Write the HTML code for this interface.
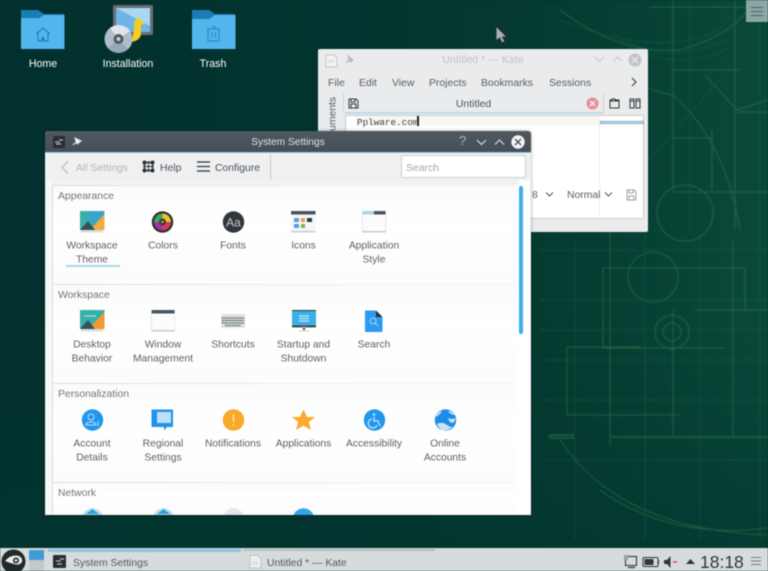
<!DOCTYPE html>
<html><head><meta charset="utf-8"><title>Desktop</title>
<style>
html,body{margin:0;padding:0;width:768px;height:571px;overflow:hidden;background:#02312f}
#r{position:absolute;left:0;top:0;width:768px;height:571px;overflow:hidden;filter:blur(.45px);font-family:"Liberation Sans",sans-serif;color:#4d4d4d;font-size:10.4px}
.a{position:absolute}
.t{position:absolute;white-space:nowrap;line-height:13px;transform:translateY(1px)}
.c{position:absolute;width:90px;text-align:center;line-height:13.7px;color:#5a5f63;font-size:10.3px;transform:translateY(1.3px)}
.g{position:absolute;left:52px;width:463px;height:98px;border-left:1px solid #dfe1e2;border-top:1px solid transparent;border-image:linear-gradient(90deg,#dcdedf,#f2f3f3 70%) 1;border-right:none;border-bottom:none;background:linear-gradient(#fafbfb,#fff 40%,#fcfcfc)}
.h{position:absolute;left:58px;color:#70757a;font-size:10.4px;line-height:13px;transform:translateY(1px)}
.d{position:absolute;color:#fff;font-size:10.6px;width:90px;text-align:center;line-height:13px;transform:translateY(1px)}
</style></head><body><div id="r">

<!-- wallpaper -->
<svg class="a" style="left:0;top:0;filter:blur(.5px)" width="768" height="571" viewBox="0 0 768 571">
<defs>
<linearGradient id="bg" x1="0" y1="0" x2="1" y2="0"><stop offset="0" stop-color="#02302e"/><stop offset=".5" stop-color="#03352f"/><stop offset=".75" stop-color="#063c32"/><stop offset="1" stop-color="#0a4a3a"/></linearGradient>
<linearGradient id="bot" x1="0" y1="0" x2="0" y2="1"><stop offset=".55" stop-color="#03352f" stop-opacity="0"/><stop offset="1" stop-color="#03352f" stop-opacity=".75"/></linearGradient>
</defs>
<rect width="768" height="571" fill="url(#bg)"/>
<rect width="768" height="571" fill="url(#bot)"/>
<g fill="none" stroke="#3c8a50" stroke-width="1" opacity=".5">
<path d="M650 7H748M673 0V190M735 0V230M673 95Q725 140 740 230M705 75L737 110L768 100M737 112H768M673 138H712M712 130V190M673 70H740M673 192H768M600 60Q640 90 673 95M560 10Q620 55 680 50Q735 35 755 0"/>
<circle cx="685" cy="213" r="28"/><circle cx="653" cy="277" r="25"/><circle cx="672" cy="332" r="17"/><circle cx="672" cy="332" r="9"/>
<path d="M603 268H730M603 268V348H725M610 230V445M673 310V435M733 240V435"/>
<path d="M567 347V415H680M567 347H640"/>
<path d="M550 435H573V438H550ZM610 437H768" stroke-width="1.500"/>
<path d="M560 440Q620 530 768 535M600 490Q670 540 768 528"/>
<path d="M700 268H745V310H700M695 310H768"/>
</g>
<g fill="none" stroke="#1f6640" stroke-width="1" opacity=".38">
<path d="M540 250H768M540 300H768M540 330H768M540 360H768M540 400H768M540 460H768M575 240V540M645 235V540M700 235V540M760 0V540M690 0V230M720 80L640 170"/>
<path d="M560 20Q660 60 720 30M610 30Q660 70 725 40M620 40Q670 75 730 48"/>
</g>
</svg>

<div class="a" style="left:746px;top:0;width:22px;height:22px;background:#8aa7a5"></div>
<div class="a" style="left:751px;top:7px;width:12px;height:7px;border-top:1px solid #4d6060;border-bottom:1px solid #4d6060"></div>
<div class="a" style="left:751px;top:10.500px;width:12px;height:1px;background:#4d6060"></div>

<!-- desktop icons -->
<svg class="a" style="left:21px;top:9px" width="44" height="42" viewBox="0 0 44 42">
<path d="M0 1H17L23 5H43V14H0Z" fill="#1b7cb4"/><rect x="0" y="9" width="43.500" height="31" fill="#4bb1e9"/><path d="M0 10H17L23 6H43.500V40H0Z" fill="#52b6ec"/>
<path d="M15 25L22 19L29 25M17 24V32H27V24" fill="none" stroke="#1f82b8" stroke-width="1.200"/><rect x="20.500" y="28" width="3" height="4" fill="#1f82b8"/></svg>
<div class="d" style="left:-2px;top:57px">Home</div>

<svg class="a" style="left:103px;top:4px" width="52" height="50" viewBox="0 0 52 50">
<rect x="10" y="1" width="40" height="30" rx="2" fill="#6a6e70"/><rect x="13" y="4" width="34" height="24" fill="#6fb4e6"/><path d="M13 4H47V22Z" fill="#a9d6f3"/>
<path d="M31 19L34 13L42 20L38 21V31Q36 37 28 38L31 27Z" fill="#f5cd1b"/>
<circle cx="15.500" cy="35" r="14" fill="#aebccb"/><path d="M15.500 35L7 24A14 14 0 0 1 27 27Z" fill="#dfe5ec"/><path d="M15.500 35L5 44A14 14 0 0 0 25 45Z" fill="#98a8bb"/><circle cx="15.500" cy="35" r="5" fill="#4e5a5c"/><circle cx="15.500" cy="35" r="2" fill="#c8ced4"/></svg>
<div class="d" style="left:83px;top:57px">Installation</div>

<svg class="a" style="left:191px;top:9px" width="45" height="42" viewBox="0 0 45 42">
<path d="M1 1H18L24 5H44V14H1Z" fill="#1b7cb4"/><path d="M1 10H18L24 6H44.500V40H1Z" fill="#52b6ec"/>
<path d="M16 20H29M21 18H25M17 20V32H28V20M21 23V29M24.500 23V29" fill="none" stroke="#2b8cc2" stroke-width="1.200"/></svg>
<div class="d" style="left:168px;top:57px">Trash</div>

<!-- cursor -->
<svg class="a" style="left:494px;top:25px" width="14" height="20" viewBox="0 0 14 20"><path d="M2 1V16L5.500 13L8 18L11 16.500L8.500 12H13Z" fill="#a9afb1" stroke="#24302f" stroke-width="1"/></svg>

<!-- Kate -->
<div class="a" style="left:318px;top:49px;width:330px;height:183px;background:#e9ebec;border-radius:2px"></div>
<svg class="a" style="left:325px;top:54px" width="14" height="14" viewBox="0 0 14 14"><path d="M1 1H9L12 4V13H1Z" fill="#f2f3f3" stroke="#c3c7c9"/><path d="M3 6H9M3 8H9" stroke="#d4d7d8"/></svg>
<svg class="a" style="left:344px;top:54px" width="11" height="11" viewBox="0 0 11 11"><path d="M2 9L5 6M4 2L9 6L6 8Z" fill="#b4b9bc" stroke="#b4b9bc"/></svg>
<div class="t" style="left:318px;width:330px;text-align:center;top:53px;color:#c1c5c8;font-size:10.600px">Untitled * — Kate</div>
<svg class="a" style="left:590px;top:53px" width="58" height="14" viewBox="0 0 58 14"><path d="M5 4L9.500 8.500L14 4M23 8.500L27.500 4L32 8.500" fill="none" stroke="#c5c9cb" stroke-width="1.100"/><circle cx="45" cy="7" r="6.500" fill="#c1c5c7"/><path d="M42 4L48 10M48 4L42 10" stroke="#eceeef" stroke-width="1.200"/></svg>
<div class="t" style="left:328px;top:76px;color:#5a5f63">File</div>
<div class="t" style="left:359px;top:76px;color:#5a5f63">Edit</div>
<div class="t" style="left:392px;top:76px;color:#5a5f63">View</div>
<div class="t" style="left:429px;top:76px;color:#5a5f63">Projects</div>
<div class="t" style="left:481px;top:76px;color:#5a5f63">Bookmarks</div>
<div class="t" style="left:549px;top:76px;color:#5a5f63">Sessions</div>
<svg class="a" style="left:630px;top:77px" width="8" height="10" viewBox="0 0 8 10"><path d="M2 1L6 5L2 9" fill="none" stroke="#3c4144" stroke-width="1.100"/></svg>
<div class="a" style="left:343px;top:93px;width:1px;height:20px;background:#cfd2d3"></div>
<div class="a" style="left:310px;top:110px;width:46px;text-align:center;line-height:13px;white-space:nowrap;transform:rotate(-90deg);color:#5a5f63">cuments</div>
<svg class="a" style="left:348px;top:98px" width="11" height="11" viewBox="0 0 11 11"><path d="M1 1H8L10 3V10H1ZM3 1V4H7V1M3 10V6H8V10" fill="none" stroke="#33383b"/></svg>
<div class="t" style="left:345px;width:257px;text-align:center;top:97px;color:#50555a">Untitled</div>
<svg class="a" style="left:586px;top:97px" width="13" height="13" viewBox="0 0 13 13"><circle cx="6.500" cy="6.500" r="6" fill="#e58e97"/><path d="M4 4L9 9M9 4L4 9" stroke="#fff" stroke-width="1.200"/></svg>
<div class="a" style="left:603px;top:93px;width:1px;height:20px;background:#cfd2d3"></div>
<svg class="a" style="left:609px;top:98px" width="32" height="11" viewBox="0 0 32 11"><path d="M1 2H3V1H6V2H10V10H1Z" fill="none" stroke="#33383b"/><path d="M1 3H10" stroke="#33383b"/><path d="M21 1H25V10H21ZM27 1H31V10H27Z" fill="none" stroke="#33383b"/><path d="M21 3H25M27 3H31" stroke="#33383b"/></svg>
<div class="a" style="left:345px;top:112px;width:258px;height:2px;background:#bcdcee"></div>
<div class="a" style="left:345px;top:115px;width:299px;box-sizing:border-box;height:104px;background:#fff;border:1px solid #c9cccd"></div>
<div class="a" style="left:356px;top:116px;width:243px;height:10px;background:#f8f7f3"></div>
<div class="a" style="left:599px;top:116px;width:1px;height:102px;background:#eceeee"></div>
<div class="a" style="left:600px;top:121px;width:44px;height:3px;background:#d8e8f2;border:1px solid #7fa6bd;box-sizing:border-box"></div>
<div class="t" style="left:357px;top:115px;font-family:'Liberation Mono',monospace;font-size:9.300px;color:#3b3f42">Pplware.com</div>
<div class="a" style="left:417px;top:116px;width:1.500px;height:10px;background:#222"></div>
<div class="t" style="left:532px;top:188px;color:#5a5f63">8</div>
<svg class="a" style="left:545px;top:189px" width="100" height="12" viewBox="0 0 100 12"><path d="M1 3.500L4.500 7L8 3.500M60 3.500L63.500 7L67 3.500" fill="none" stroke="#50555a"/><path d="M82 1H89L91 3V11H82ZM84 1V4H88V1M84 11V7H89V11" fill="none" stroke="#9ea3a6"/></svg>
<div class="t" style="left:567px;top:188px;color:#5a5f63">Normal</div>

<!-- System settings -->
<div class="a" style="left:45px;top:131px;width:486px;height:384px;background:#eff0f1;border-radius:3px 3px 0 0;box-shadow:0 0 3px rgba(0,0,0,.35)"></div>
<div class="a" style="left:45px;top:131px;width:486px;height:21px;background:linear-gradient(#4f5962,#454f58);border-radius:3px 3px 0 0"></div>
<div class="a" style="left:45px;top:151.500px;width:486px;height:1.500px;background:#8ec8e6"></div>
<svg class="a" style="left:52px;top:135px" width="34" height="13" viewBox="0 0 34 13"><rect x="1" y="1" width="12" height="12" rx="1" fill="#2a2e32"/><path d="M3 7H8M7 5H11M9 9H4" stroke="#d0d3d5" stroke-width=".9"/><path d="M21 10L24 7M23 3L29 6L25 9Z" fill="#eceeef" stroke="#eceeef"/></svg>
<div class="t" style="left:45px;width:486px;text-align:center;top:134.500px;color:#dfe2e4;font-size:10.200px">System Settings</div>
<div class="t" style="left:459px;top:133px;color:#aeb5ba;font-size:13px">?</div>
<svg class="a" style="left:475px;top:135px" width="50" height="14" viewBox="0 0 50 14"><path d="M2 5L6.500 9.500L11 5M20 9.500L24.500 5L29 9.500" fill="none" stroke="#dfe2e4" stroke-width="1.100"/><circle cx="43" cy="7" r="6.700" fill="#f3f4f5"/><path d="M40 4L46 10M46 4L40 10" stroke="#4a545d" stroke-width="1.300"/></svg>

<!-- toolbar -->
<svg class="a" style="left:60px;top:160px" width="10" height="15" viewBox="0 0 10 15"><path d="M8 1.500L2 7.500L8 13.500" fill="none" stroke="#b6babc" stroke-width="1.200"/></svg>
<div class="t" style="left:76px;top:161px;color:#b1b5b8">All Settings</div>
<svg class="a" style="left:142px;top:160px" width="13" height="13" viewBox="0 0 13 13"><rect x="2.500" y="2.500" width="8" height="8" fill="none" stroke="#2e3236" stroke-width="1.500"/><circle cx="2.500" cy="2.500" r="2" fill="#2e3236"/><circle cx="10.500" cy="2.500" r="2" fill="#2e3236"/><circle cx="2.500" cy="10.500" r="2" fill="#2e3236"/><circle cx="10.500" cy="10.500" r="2" fill="#2e3236"/><path d="M6.500 1V12M1 6.500H12" stroke="#2e3236"/></svg>
<div class="t" style="left:160px;top:161px;color:#4d5256">Help</div>
<svg class="a" style="left:197px;top:161px" width="13" height="11" viewBox="0 0 13 11"><path d="M0 1H13M0 5.500H13M0 10H13" stroke="#2e3236" stroke-width="1.200"/></svg>
<div class="t" style="left:215px;top:161px;color:#4d5256">Configure</div>
<div class="a" style="left:270px;top:154px;width:1px;height:26px;background:#c7cacb"></div>
<div class="a" style="left:401px;top:155px;width:125px;height:23px;box-sizing:border-box;background:#fff;border:1px solid #ccd0d1;border-radius:2px"></div>
<div class="t" style="left:406px;top:161px;color:#a3a7aa">Search</div>

<!-- content -->
<div class="a" style="left:46px;top:180px;width:484px;height:335px;background:#fff"></div>
<div class="a" style="left:46px;top:180px;width:473px;height:5px;background:#f1f2f3"></div>
<div class="a" style="left:46px;top:180px;width:6px;height:335px;background:#f6f7f7"></div>
<div class="g" style="top:185px"></div>
<div class="g" style="top:284px"></div>
<div class="g" style="top:383px"></div>
<div class="g" style="top:482px;height:32px"></div>
<div class="a" style="left:519px;top:186px;width:4px;height:148px;background:#3daee9;border-radius:2px"></div>

<div class="h" style="top:189px">Appearance</div>
<div class="h" style="top:288px">Workspace</div>
<div class="h" style="top:387px">Personalization</div>
<div class="h" style="top:486px">Network</div>

<!-- appearance icons -->
<svg class="a" style="left:80px;top:211px" width="25" height="23" viewBox="0 0 25 23"><rect width="24.500" height="19" fill="#36b0a8"/><path d="M10 19L24.500 3V19Z" fill="#f6a941"/><path d="M0 19L8 10L15 19Z" fill="#39505a"/><path d="M7 0H24.500V3L12 15Z" fill="#3ca3c8"/><rect x="1" y="19" width="22" height="2.500" fill="#d9dcdd"/></svg>
<svg class="a" style="left:151px;top:211px" width="23" height="23" viewBox="0 0 23 23"><circle cx="11.500" cy="11" r="10.700" fill="#2b2e31"/><path d="M11.500 2.500A8.500 8.500 0 0 1 20 11H11.500Z" fill="#e9c42f"/><path d="M20 11A8.500 8.500 0 0 1 11.500 19.500V11Z" fill="#d93a57"/><path d="M11.500 19.500A8.500 8.500 0 0 1 3 11H11.500Z" fill="#a8329c"/><path d="M3 11A8.500 8.500 0 0 1 11.500 2.500V11Z" fill="#3aa85a"/><circle cx="11.500" cy="11" r="3.500" fill="#3a3d40"/><circle cx="11.500" cy="11" r="1.200" fill="#d2a13a"/></svg>
<svg class="a" style="left:222px;top:211px" width="23" height="23" viewBox="0 0 23 23"><circle cx="11.500" cy="11" r="10.700" fill="#31363b"/><text x="11.500" y="15.500" text-anchor="middle" font-family="Liberation Sans" font-size="12" fill="#c6c9cb">Aa</text></svg>
<svg class="a" style="left:291px;top:211px" width="25" height="23" viewBox="0 0 25 23"><rect width="24.500" height="21" fill="#f4f6f7"/><rect width="24.500" height="3.500" fill="#475563"/><rect y="20" width="24.500" height="1.500" fill="#c7cbcd"/><rect x="3" y="7" width="5" height="4" fill="#5c9fd6"/><rect x="10" y="7" width="4" height="4" fill="#ef9a4c"/><rect x="16" y="7" width="5" height="4" fill="#2f3a40"/><rect x="3" y="13" width="5" height="4" fill="#5c9fd6"/><rect x="10" y="13" width="4" height="4" fill="#7ab648"/></svg>
<svg class="a" style="left:362px;top:211px" width="25" height="23" viewBox="0 0 25 23"><rect width="24" height="21" fill="#fcfcfc"/><rect width="24" height="3.500" fill="#a9d3ec"/><rect x="12" width="12" height="3.500" fill="#475563"/><rect y="20" width="24" height="1.500" fill="#c7cbcd"/><rect width=".7" height="21" fill="#ddd"/><rect x="23.500" width=".7" height="21" fill="#ddd"/></svg>
<div class="c" style="left:47px;top:238px">Workspace<br>Theme</div>
<div class="c" style="left:118px;top:238px">Colors</div>
<div class="c" style="left:188px;top:238px">Fonts</div>
<div class="c" style="left:258.500px;top:238px">Icons</div>
<div class="c" style="left:329px;top:238px">Application<br>Style</div>
<div class="a" style="left:66px;top:265px;width:54px;height:1.500px;background:#a9d6e6"></div>

<!-- workspace icons -->
<svg class="a" style="left:80px;top:310px" width="25" height="23" viewBox="0 0 25 23"><rect width="24.500" height="19" fill="#36b0a8"/><path d="M8 19L24.500 2V19Z" fill="#f29a32"/><path d="M0 19L8 10L15 19Z" fill="#39505a"/><path d="M4 6H16" stroke="#bfe8e6"/><rect x="1" y="19" width="22" height="2.500" fill="#d9dcdd"/></svg>
<svg class="a" style="left:151px;top:310px" width="24" height="23" viewBox="0 0 24 23"><rect width="24" height="21" fill="#fcfcfc"/><rect width="24" height="3.500" fill="#475563"/><rect y="20" width="24" height="1.500" fill="#c7cbcd"/><rect width=".7" height="21" fill="#ddd"/><rect x="23.500" width=".7" height="21" fill="#ddd"/></svg>
<svg class="a" style="left:221px;top:314px" width="24" height="14" viewBox="0 0 24 14"><rect width="24" height="14" rx="1" fill="#dfe2e3"/><path d="M1 4H23M1 6.500H23M1 9H23M4 11.500H20" stroke="#4e565b" stroke-width="1.300" stroke-dasharray="1.600 .7"/></svg>
<svg class="a" style="left:292px;top:310px" width="24" height="23" viewBox="0 0 24 23"><rect width="24" height="17" fill="#37b0ea"/><rect y="15.500" width="24" height="1.800" fill="#31363b"/><rect width="24" height="1" fill="#31363b"/><path d="M7 6H17M7 8.500H17M7 11H17" stroke="#cfe6f3" stroke-width="1.300"/><path d="M11 17H13V20H11ZM7 21H17" stroke="#c5c9cb"/></svg>
<svg class="a" style="left:365px;top:310px" width="18" height="23" viewBox="0 0 18 23"><path d="M0 .5H11L17.500 7V22H0Z" fill="#2a9bf0"/><path d="M11 .5L17.500 7H11Z" fill="#263238"/><circle cx="8" cy="11" r="3" fill="none" stroke="#a6d8f8"/><path d="M10 13L13 16" stroke="#a6d8f8"/></svg>
<div class="c" style="left:47px;top:337px">Desktop<br>Behavior</div>
<div class="c" style="left:118px;top:337px">Window<br>Management</div>
<div class="c" style="left:188px;top:337px">Shortcuts</div>
<div class="c" style="left:258.500px;top:337px">Startup and<br>Shutdown</div>
<div class="c" style="left:329px;top:337px">Search</div>

<!-- personalization icons -->
<svg class="a" style="left:81px;top:409px" width="23" height="23" viewBox="0 0 23 23"><circle cx="11.500" cy="11" r="10.700" fill="#2196ee"/><circle cx="10" cy="8" r="3" fill="none" stroke="#bfe0f8"/><path d="M5 16C5 12 15 12 15 16ZM17 12V17" fill="none" stroke="#bfe0f8"/></svg>
<svg class="a" style="left:151px;top:409px" width="24" height="23" viewBox="0 0 24 23"><path d="M.5 .5H22V18H16L13 21.500V18H.5Z" fill="#1f94ed"/><rect x="6" y="3" width="14" height="11" fill="#bfe0f8"/></svg>
<svg class="a" style="left:222px;top:409px" width="23" height="23" viewBox="0 0 23 23"><circle cx="11.500" cy="11" r="10.700" fill="#f8a928"/><path d="M11.500 5V13M11.500 15V17" stroke="#fbe4b6" stroke-width="1.500"/></svg>
<svg class="a" style="left:292px;top:409px" width="24" height="23" viewBox="0 0 24 23"><path d="M11.500 .5L15 8H23L16.800 13L19 21L11.500 16.500L4 21L6.200 13L0 8H8Z" fill="#fba92c"/></svg>
<svg class="a" style="left:363px;top:409px" width="23" height="23" viewBox="0 0 23 23"><circle cx="11.500" cy="11" r="10.700" fill="#2196ee"/><circle cx="11" cy="5.500" r="1.300" fill="#cfe7fa"/><path d="M11 8V12H15L17 17M9 10A4.500 4.500 0 1 0 14 16" fill="none" stroke="#cfe7fa" stroke-width="1.200"/></svg>
<svg class="a" style="left:434px;top:409px" width="23" height="23" viewBox="0 0 23 23"><circle cx="11.500" cy="11" r="10.700" fill="#1f8cea"/><path d="M1.500 8Q6 6 8 2Q3 3 1.500 8ZM3 15Q8 12 13 16Q17 19 19 17Q15 22 9 21.500Q5 20 3 15ZM14 2Q17 6 21 6Q18 2 14 2ZM14 9Q18 11 21.500 9Q21 13 18 14Q15 13 14 9Z" fill="#cfe3f5"/></svg>
<div class="c" style="left:47px;top:436px">Account<br>Details</div>
<div class="c" style="left:118px;top:436px">Regional<br>Settings</div>
<div class="c" style="left:188px;top:436px">Notifications</div>
<div class="c" style="left:258.500px;top:436px">Applications</div>
<div class="c" style="left:329px;top:436px">Accessibility</div>
<div class="c" style="left:400px;top:436px">Online<br>Accounts</div>

<!-- network icons (clipped) -->
<div class="a" style="left:46px;top:507px;width:473px;height:7.500px;overflow:hidden">
<svg class="a" style="left:35px;top:1px" width="23" height="8" viewBox="0 0 23 8"><circle cx="11.500" cy="11" r="10.700" fill="#b8ddf3"/><path d="M5 6L11.500 1L18 6Z" fill="#2f9fe0"/></svg>
<svg class="a" style="left:106px;top:1px" width="23" height="8" viewBox="0 0 23 8"><circle cx="11.500" cy="11" r="10.700" fill="#b8ddf3"/><path d="M5 6L11.500 1L18 6Z" fill="#2f9fe0"/></svg>
<svg class="a" style="left:176px;top:1px" width="23" height="8" viewBox="0 0 23 8"><circle cx="11.500" cy="11" r="10.700" fill="#e4e6e7"/></svg>
<svg class="a" style="left:246px;top:1px" width="23" height="8" viewBox="0 0 23 8"><circle cx="11.500" cy="11" r="10.700" fill="#33a4ea"/></svg>
</div>

<!-- taskbar -->
<div class="a" style="left:0;top:548px;width:768px;height:23px;background:#d6dbdd"></div>
<svg class="a" style="left:1px;top:549px" width="25" height="22" viewBox="0 0 25 22"><circle cx="12.500" cy="12.500" r="12" fill="#23282a"/><path d="M4 12Q10 5 18 7Q22 9 21 13Q18 17 13 15Q9 14 4 12Z" fill="#e9ebec"/><circle cx="15" cy="11.500" r="3" fill="#23282a"/><circle cx="15" cy="11.500" r="1.400" fill="#e9ebec"/></svg>
<div class="a" style="left:29px;top:550px;width:15px;height:10px;background:#3f9bd6"></div>
<div class="a" style="left:29px;top:560px;width:15px;height:11px;background:#c3c8ca"></div>
<div class="a" style="left:48px;top:549px;width:193px;height:2.500px;background:#8cc3e2"></div>
<div class="a" style="left:243px;top:549px;width:192px;height:2px;background:#b9bfc2"></div>
<svg class="a" style="left:53px;top:555px" width="14" height="14" viewBox="0 0 14 14"><rect width="13" height="13" rx="1" fill="#2a2e32"/><path d="M3 6H8M7 4H11M9 9H4" stroke="#d0d3d5" stroke-width=".9"/></svg>
<div class="t" style="left:73px;top:555.500px;color:#55595d">System Settings</div>
<svg class="a" style="left:249px;top:555px" width="13" height="14" viewBox="0 0 13 14"><path d="M1 .5H9L12 3.500V13H1Z" fill="#eff0f1" stroke="#bfc3c5"/><path d="M3 7H9M3 9H9" stroke="#d0d3d4"/></svg>
<div class="t" style="left:267px;top:555.500px;color:#55595d">Untitled * — Kate</div>

<!-- tray -->
<svg class="a" style="left:623px;top:554px" width="75" height="16" viewBox="0 0 75 16"><rect x="2.500" y="2.500" width="11" height="9" fill="none" stroke="#31363b" stroke-width="1.100"/><rect x="1" y="1" width="4" height="5" fill="#9aa0a3"/><path d="M5 13.500H12" stroke="#31363b" stroke-width="1.200"/><rect x="20" y="3.500" width="15" height="9" rx="1" fill="none" stroke="#31363b"/><rect x="21.500" y="5" width="9" height="6" fill="#31363b"/><path d="M35.500 6V10" stroke="#31363b"/><path d="M41 6H44L47.500 2V14L44 10H41Z" fill="#31363b"/><path d="M50 8H54" stroke="#d8394f" stroke-width="1.300"/><path d="M63 10L67.500 5L72 10Z" fill="#31363b"/></svg>
<div class="t" style="left:700px;top:552px;color:#31363b;font-size:17.500px;line-height:18px">18:18</div>
<svg class="a" style="left:750px;top:556px" width="12" height="10" viewBox="0 0 12 10"><path d="M1 1.500H11M1 5H11M1 8.500H11" stroke="#777c80" stroke-width="1.100"/></svg>

</div></body></html>
